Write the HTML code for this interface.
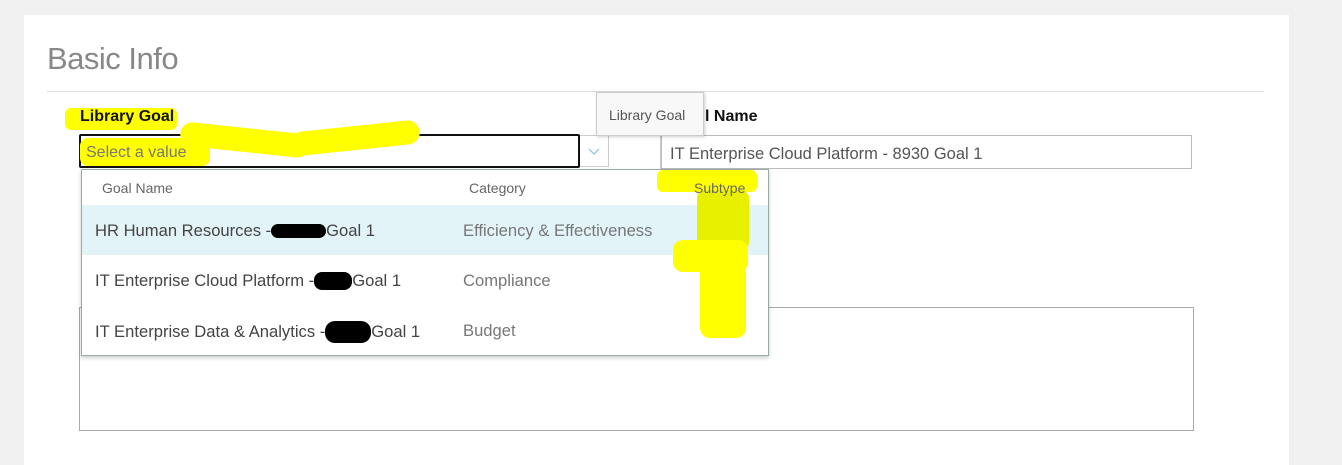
<!DOCTYPE html>
<html><head><style>
body{margin:0;width:1342px;height:454px;background:#f0f0f0;position:relative;overflow:hidden;font-family:"Liberation Sans",sans-serif}
.a{position:absolute}
.card{left:24px;top:15px;width:1265px;height:450px;background:#fff}
.y{background:#ffff00}
.r{font-size:16.6px}
</style></head><body>
<div class="a card"></div>
<div class="a" style="left:47px;top:41px;font-size:31px;color:#888;letter-spacing:-0.5px">Basic Info</div>
<div class="a" style="left:47px;top:91px;width:1217px;height:1px;background:#ddd"></div>

<div class="a y" style="left:65px;top:108px;width:112px;height:22px;border-radius:6px"></div>
<div class="a" style="left:80px;top:108px;font-size:16px;font-weight:bold;color:#111">Library Goal</div>
<div class="a" style="left:705px;top:108px;font-size:16px;font-weight:bold;color:#111">l Name</div>

<div class="a" style="left:579px;top:135px;width:30px;height:32px;border:1px solid #ccc;border-left:none;box-sizing:border-box"></div>
<svg class="a" style="left:588px;top:148px" width="12" height="8"><path d="M1 1L6 6L11 1" stroke="#9cc3dc" stroke-width="1.3" fill="none"/></svg>
<div class="a" style="left:609px;top:135px;width:52px;height:34px;border-top:1px solid #ccc;border-right:1px solid #ccc;box-sizing:border-box"></div>
<div class="a" style="left:661px;top:135px;width:531px;height:34px;border:1px solid #bbb;box-sizing:border-box;font-size:16.5px;color:#555;padding:9px 0 0 8px">IT Enterprise Cloud Platform - 8930 Goal 1</div>

<div class="a" style="left:79px;top:307px;width:1115px;height:124px;border:1px solid #aaa;box-sizing:border-box"></div>

<div class="a" style="left:79px;top:134px;width:501px;height:34px;border:2px solid #111;border-radius:2px;box-sizing:border-box"></div>
<div class="a y" style="left:80px;top:138px;width:130px;height:28px;border-radius:8px"></div>
<div class="a y" style="left:180px;top:128px;width:130px;height:24px;border-radius:14px;transform:rotate(6deg)"></div>
<div class="a y" style="left:290px;top:126px;width:130px;height:24px;border-radius:14px;transform:rotate(-6deg)"></div>
<div class="a" style="left:86px;top:144px;font-size:16px;color:#777">Select a value</div>

<div class="a" style="left:81px;top:169px;width:688px;height:187px;background:#fff;border:1px solid #9aa;box-sizing:border-box;box-shadow:0 2px 4px rgba(0,0,0,.2)"></div>
<div class="a" style="left:82px;top:205px;width:686px;height:50px;background:#e3f4f9"></div>
<div class="a" style="left:102px;top:180px;font-size:14px;color:#666">Goal Name</div>
<div class="a" style="left:469px;top:180px;font-size:14px;color:#666">Category</div>
<div class="a r" style="left:95px;top:221px;color:#444">HR Human Resources -<span style="display:inline-block;width:55px;height:14px;background:#000;border-radius:7px;vertical-align:-2px"></span>Goal 1</div>
<div class="a r" style="left:95px;top:271px;color:#444">IT Enterprise Cloud Platform -<span style="display:inline-block;width:38px;height:18px;background:#000;border-radius:8px;vertical-align:-4px"></span>Goal 1</div>
<div class="a r" style="left:95px;top:321px;color:#444">IT Enterprise Data &amp; Analytics -<span style="display:inline-block;width:46px;height:22px;background:#000;border-radius:10px;vertical-align:-6px"></span>Goal 1</div>
<div class="a r" style="left:463px;top:221px;color:#777">Efficiency &amp; Effectiveness</div>
<div class="a r" style="left:463px;top:271px;color:#777">Compliance</div>
<div class="a r" style="left:463px;top:321px;color:#777">Budget</div>

<div class="a y" style="left:657px;top:170px;width:100px;height:22px;border-radius:6px"></div>
<div class="a y" style="left:697px;top:190px;width:52px;height:60px;border-radius:8px;background:#e8f000"></div>
<div class="a y" style="left:673px;top:240px;width:75px;height:32px;border-radius:10px"></div>
<div class="a y" style="left:700px;top:260px;width:46px;height:78px;border-radius:10px"></div>
<div class="a" style="left:694px;top:180px;font-size:14px;color:#666">Subtype</div>

<div class="a" style="left:596px;top:92px;width:108px;height:44px;background:#f8f8f8;border:1px solid #ccc;box-sizing:border-box;box-shadow:1px 1px 3px rgba(0,0,0,.2);font-size:14px;color:#555;padding:14px 0 0 12px">Library Goal</div>
</body></html>
